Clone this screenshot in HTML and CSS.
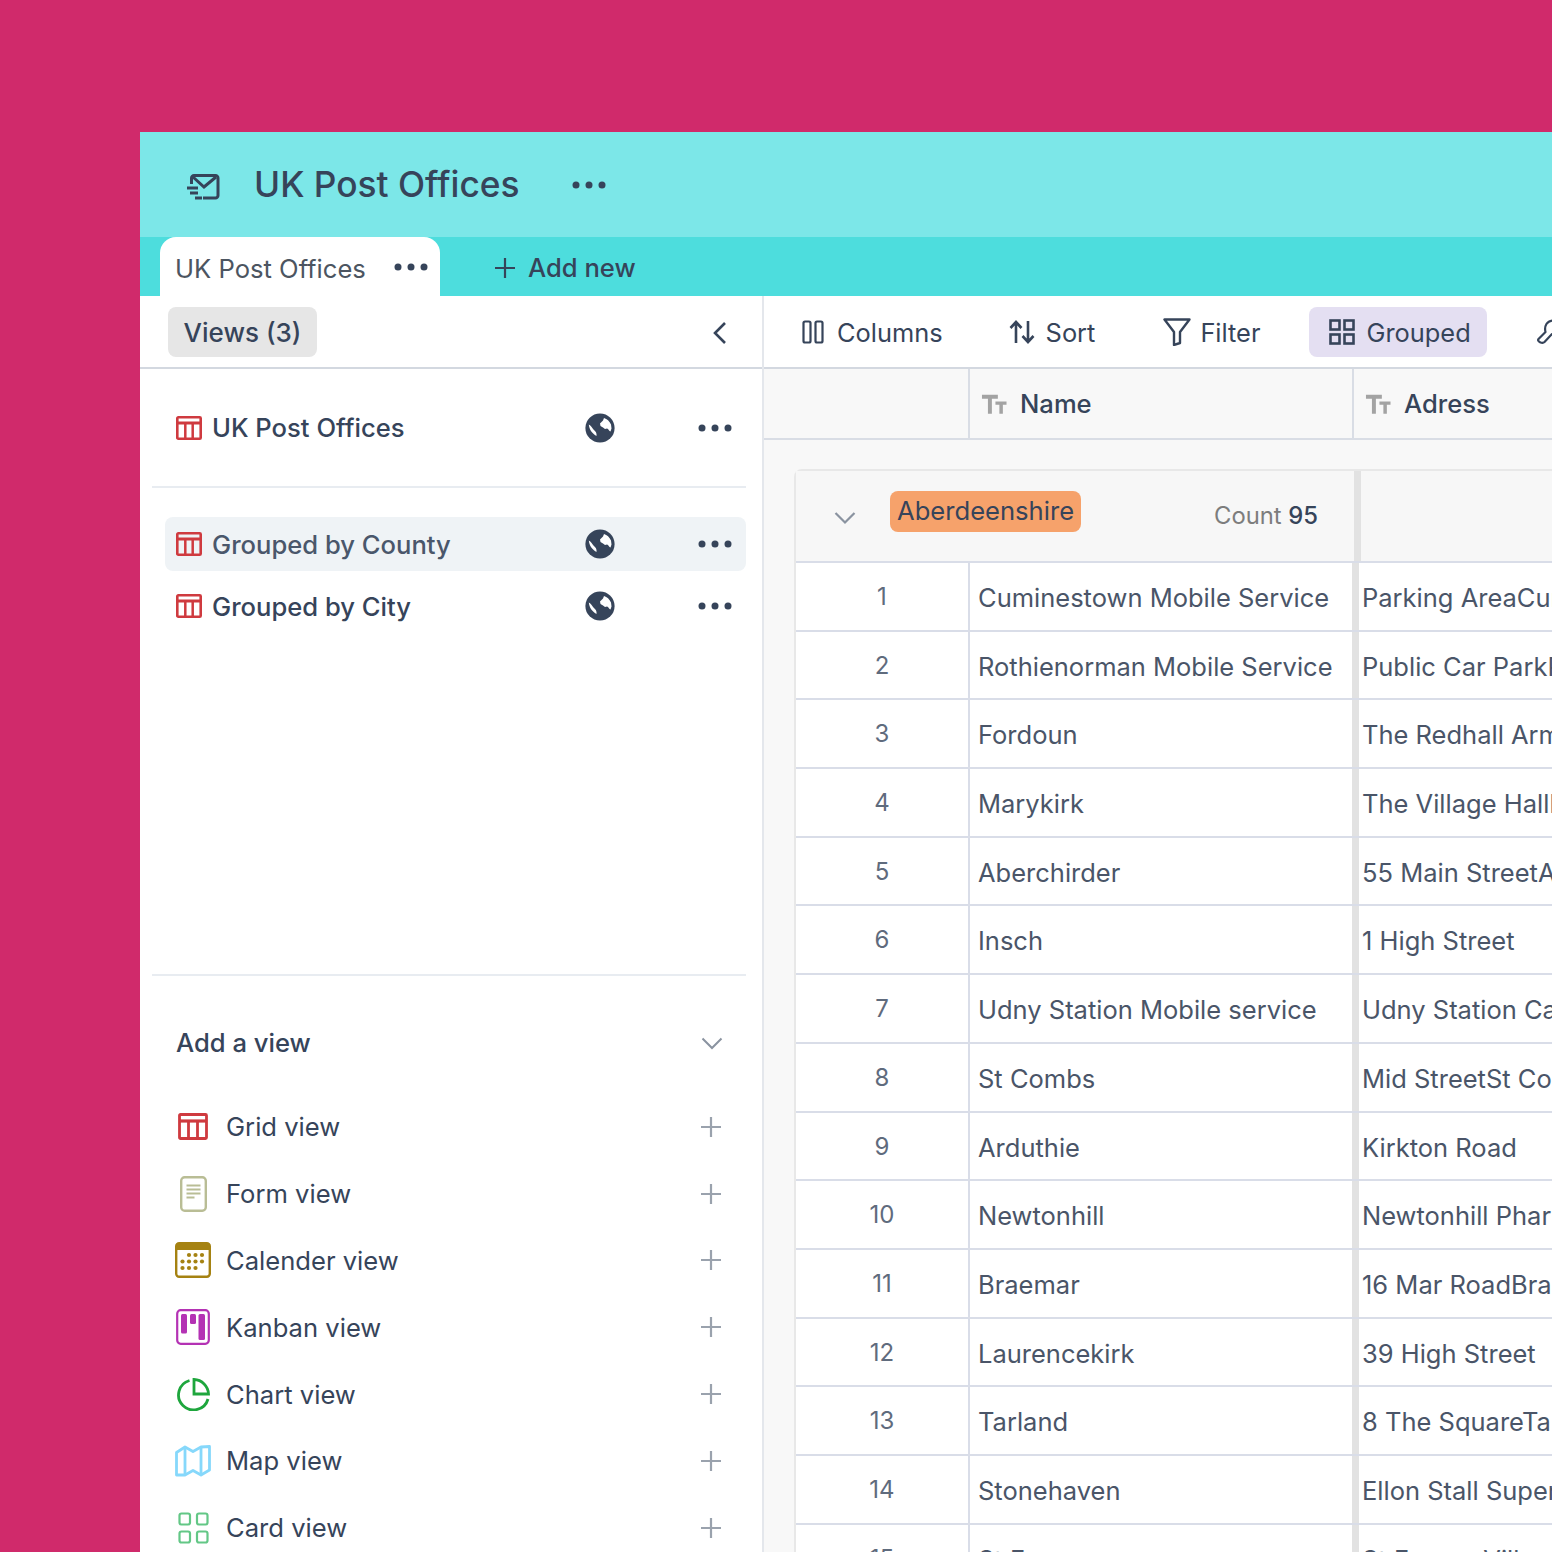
FILE: index.html
```html
<!DOCTYPE html>
<html lang="en">
<head>
<meta charset="utf-8">
<title>UK Post Offices</title>
<link rel="stylesheet" href="styles.css">
</head>
<body>
<svg class="defs" width="0" height="0" aria-hidden="true">
  <symbol id="dots" viewBox="0 0 34 8"><circle cx="4" cy="4" r="3.5"/><circle cx="17" cy="4" r="3.5"/><circle cx="30" cy="4" r="3.5"/></symbol>
  <symbol id="grid" viewBox="0 0 26 24"><rect x="1.3" y="1.3" width="23.4" height="21.4" rx="1" fill="none" stroke="#cf3a3f" stroke-width="2.6"/><path d="M1 7h24" stroke="#cf3a3f" stroke-width="3"/><path d="M9.300 7v16M16.700 7v16" stroke="#cf3a3f" stroke-width="2.500"/></symbol>
  <symbol id="globe" viewBox="0 0 30 30"><circle cx="15" cy="15" r="14.6" fill="#36445a"/><path d="M16 9.500l2-2 1-2.500c3 1 5.500 3 7 6.500l.5 4-1 3c-1.500-.5-2-2.500-3.500-3l-2 .5-2-1.500-2.500-1.500-.5-2.500zM3.800 11.500c.5 5 3.200 9 7.700 11.500.5-3-1-4.500-2.800-6.200-1.700-1.800-2.700-4.300-4.900-5.300z" fill="#fff"/></symbol>
  <symbol id="tt" viewBox="0 0 27 22"><path d="M1 1.500h16.500v4h-6.200V21H7.200V5.500H1z" fill="#a3a3a3"/><path d="M15 8.500h11.500v3.200h-3.800V21h-3.600v-9.300H15z" fill="#a3a3a3"/></symbol>
  <symbol id="plus" viewBox="0 0 22 22"><path d="M11 1v20M1 11h20" fill="none" stroke="currentColor" stroke-width="2.200"/></symbol>
</svg>

<div class="app">
  <header class="titlebar">
    <svg class="mail" viewBox="0 0 34 27" fill="none" stroke="#36445a" stroke-width="3"><path d="M4.500 11V5A2.500 2.500 0 0 1 7 2.500h21.500A2.500 2.500 0 0 1 31 5v17.500a2.500 2.500 0 0 1-2.500 2.500H16"/><path d="M6 4l11 10L29 4"/><path d="M0 15h11M3 20h8M8 25h7"/></svg>
    <h1>UK Post Offices</h1>
    <svg class="dots title-dots"><use href="#dots"/></svg>
  </header>

  <nav class="tabbar">
    <div class="tab">
      <span>UK Post Offices</span>
      <svg class="dots"><use href="#dots"/></svg>
    </div>
    <div class="add-new">
      <svg class="add-plus"><use href="#plus"/></svg>
      <span>Add new</span>
    </div>
  </nav>

  <div class="body">
    <aside class="sidebar">
      <div class="side-head">
        <span class="views-chip">Views (3)</span>
        <svg class="back" viewBox="0 0 14 24" fill="none" stroke="#36445a" stroke-width="2.600"><path d="M12 2L2 12l10 10"/></svg>
      </div>
      <div class="side-top">
        <div class="view-row">
          <svg class="grid-ic"><use href="#grid"/></svg>
          <span class="view-name">UK Post Offices</span>
          <svg class="globe"><use href="#globe"/></svg>
          <svg class="dots"><use href="#dots"/></svg>
        </div>
      </div>
      <div class="side-mid">
        <div class="view-row active">
          <svg class="grid-ic"><use href="#grid"/></svg>
          <span class="view-name">Grouped by County</span>
          <svg class="globe"><use href="#globe"/></svg>
          <svg class="dots"><use href="#dots"/></svg>
        </div>
        <div class="view-row">
          <svg class="grid-ic"><use href="#grid"/></svg>
          <span class="view-name">Grouped by City</span>
          <svg class="globe"><use href="#globe"/></svg>
          <svg class="dots"><use href="#dots"/></svg>
        </div>
      </div>
      <div class="side-add">
        <div class="add-head">
          <span>Add a view</span>
          <svg class="add-chev" viewBox="0 0 22 13" fill="none" stroke="#8a93a0" stroke-width="2"><path d="M1.500 1.500L11 11l9.500-9.500"/></svg>
        </div>
        <div class="add-row">
          <span class="ic-box"><svg class="ic ic-grid" viewBox="0 0 30 27"><rect x="1.500" y="1.500" width="27" height="24" rx="1" fill="none" stroke="#cf3a3f" stroke-width="2.800"/><path d="M1 8h28" stroke="#cf3a3f" stroke-width="3.200"/><path d="M10.500 8v18M19.500 8v18" stroke="#cf3a3f" stroke-width="2.800"/></svg></span>
          <span class="add-label">Grid view</span>
          <svg class="row-plus"><use href="#plus"/></svg>
        </div>
        <div class="add-row">
          <span class="ic-box"><svg class="ic ic-form" viewBox="0 0 27 36" fill="none" stroke="#b9bd95"><rect x="1.200" y="1.200" width="24.600" height="33.600" rx="3.500" stroke-width="2.400"/><path d="M6.500 9.500h14M6.500 13.500h14M6.500 17.500h14M6.500 21.500h8" stroke-width="2"/></svg></span>
          <span class="add-label">Form view</span>
          <svg class="row-plus"><use href="#plus"/></svg>
        </div>
        <div class="add-row">
          <span class="ic-box"><svg class="ic ic-cal" viewBox="0 0 36 36"><rect x="1.200" y="1.200" width="33.600" height="33.600" rx="3" fill="#fff" stroke="#a58212" stroke-width="2.400"/><path d="M1 8V4a3 3 0 0 1 3-3h28a3 3 0 0 1 3 3v4z" fill="#a58212"/><g fill="#a58212"><circle cx="14" cy="13" r="2.100"/><circle cx="20.500" cy="13" r="2.100"/><circle cx="27" cy="13" r="2.100"/><circle cx="7.500" cy="19.500" r="2.100"/><circle cx="14" cy="19.500" r="2.100"/><circle cx="20.500" cy="19.500" r="2.100"/><circle cx="27" cy="19.500" r="2.100"/><circle cx="7.500" cy="26" r="2.100"/><circle cx="14" cy="26" r="2.100"/><circle cx="20.500" cy="26" r="2.100"/></g></svg></span>
          <span class="add-label">Calender view</span>
          <svg class="row-plus"><use href="#plus"/></svg>
        </div>
        <div class="add-row">
          <span class="ic-box"><svg class="ic ic-kan" viewBox="0 0 34 36"><rect x="1.200" y="1.200" width="31.600" height="33.600" rx="3.500" fill="none" stroke="#b432b4" stroke-width="2.200"/><rect x="5" y="5" width="6" height="19.500" rx="1.500" fill="#b432b4"/><rect x="14" y="5" width="6" height="10" rx="1.500" fill="#b432b4"/><rect x="22.500" y="5" width="6.500" height="26" rx="1.500" fill="#b432b4"/></svg></span>
          <span class="add-label">Kanban view</span>
          <svg class="row-plus"><use href="#plus"/></svg>
        </div>
        <div class="add-row">
          <span class="ic-box"><svg class="ic ic-chart" viewBox="0 0 33 33" fill="none" stroke="#1ea63d" stroke-width="2.800"><path d="M31 21A15 15 0 1 1 12.500 2.500"/><path d="M17 1.500A15 15 0 0 1 31.500 16H17z"/></svg></span>
          <span class="add-label">Chart view</span>
          <svg class="row-plus"><use href="#plus"/></svg>
        </div>
        <div class="add-row">
          <span class="ic-box"><svg class="ic ic-map" viewBox="0 0 36 32" fill="none" stroke="#86d8fb" stroke-width="2.800" stroke-linejoin="round"><path d="M1.500 30V7.500L10 2l8 4.500L26 2l8.500-.5V25L26 30l-8-4.500L10 30z"/><path d="M10 2v28M26 2v28"/></svg></span>
          <span class="add-label">Map view</span>
          <svg class="row-plus"><use href="#plus"/></svg>
        </div>
        <div class="add-row">
          <span class="ic-box"><svg class="ic ic-card" viewBox="0 0 31 32" fill="none" stroke="#63c786" stroke-width="2.200"><rect x="1.500" y="1.500" width="10.500" height="11" rx="2"/><rect x="19" y="1.500" width="10.500" height="11" rx="2"/><rect x="1.500" y="19.500" width="10.500" height="11" rx="2"/><rect x="19" y="19.500" width="10.500" height="11" rx="2"/></svg></span>
          <span class="add-label">Card view</span>
          <svg class="row-plus"><use href="#plus"/></svg>
        </div>
      </div>
    </aside>

    <main class="main">
      <div class="toolbar">
        <div class="tool tool-columns">
          <svg class="t-ic columns-ic" viewBox="0 0 22 24" fill="none" stroke="#36445a" stroke-width="2.200"><rect x="1.500" y="1.500" width="7" height="21" rx="1.500"/><rect x="13.500" y="1.500" width="7" height="21" rx="1.500"/></svg>
          <span>Columns</span>
        </div>
        <div class="tool tool-sort">
          <svg class="t-ic sort-ic" viewBox="0 0 26 24" fill="none" stroke="#36445a" stroke-width="2.600"><path d="M7 23V2M1.500 8L7 2l5.500 6M19 1v21M13.500 16l5.500 6 5.500-6"/></svg>
          <span>Sort</span>
        </div>
        <div class="tool tool-filter">
          <svg class="t-ic filter-ic" viewBox="0 0 28 28" fill="none" stroke="#36445a" stroke-width="2.400" stroke-linejoin="round"><path d="M1.500 1.500h25L17 14v11l-6 2V14z"/></svg>
          <span>Filter</span>
        </div>
        <div class="tool tool-grouped">
          <svg class="t-ic grouped-ic" viewBox="0 0 26 26" fill="none" stroke="#36445a" stroke-width="2.600"><rect x="1.500" y="1.500" width="9" height="9"/><rect x="15.500" y="1.500" width="9" height="9"/><rect x="1.500" y="15.500" width="9" height="9"/><rect x="15.500" y="15.500" width="9" height="9"/></svg>
          <span>Grouped</span>
        </div>
        <svg class="t-ic wrench" viewBox="0 0 26 26" fill="none" stroke="#36445a" stroke-width="2.200" stroke-linejoin="round"><path d="M1.500 20L8.500 13C7 7 10 1.500 16 1.500c6 0 9 5 7.500 10-1.500 3.500-5 5-8.500 3.500L7.500 23c-2 2-8-.5-6-3z"/></svg>
      </div>

      <div class="col-head">
        <div class="ch ch-num"></div>
        <div class="ch ch-name"><svg class="tt"><use href="#tt"/></svg><span>Name</span></div>
        <div class="ch ch-adr"><svg class="tt"><use href="#tt"/></svg><span>Adress</span></div>
      </div>

      <div class="content">
        <section class="group">
          <div class="g-head">
            <div class="g-left">
              <svg class="g-chev" viewBox="0 0 22 14" fill="none" stroke="#8a93a0" stroke-width="2.200"><path d="M1.500 2L11 11.500 20.500 2"/></svg>
              <span class="g-tag">Aberdeenshire</span>
              <span class="g-count">Count <b>95</b></span>
            </div>
            <div class="g-right"></div>
          </div>
          <div class="row"><div class="c-num">1</div><div class="c-name">Cuminestown Mobile Service</div><div class="c-adr">Parking AreaCuminestown</div></div>
          <div class="row"><div class="c-num">2</div><div class="c-name">Rothienorman Mobile Service</div><div class="c-adr">Public Car ParkRothienorman</div></div>
          <div class="row"><div class="c-num">3</div><div class="c-name">Fordoun</div><div class="c-adr">The Redhall Arms</div></div>
          <div class="row"><div class="c-num">4</div><div class="c-name">Marykirk</div><div class="c-adr">The Village HallMarykirk</div></div>
          <div class="row"><div class="c-num">5</div><div class="c-name">Aberchirder</div><div class="c-adr">55 Main StreetAberchirder</div></div>
          <div class="row"><div class="c-num">6</div><div class="c-name">Insch</div><div class="c-adr">1 High Street</div></div>
          <div class="row"><div class="c-num">7</div><div class="c-name">Udny Station Mobile service</div><div class="c-adr">Udny Station Car Park</div></div>
          <div class="row"><div class="c-num">8</div><div class="c-name">St Combs</div><div class="c-adr">Mid StreetSt Combs</div></div>
          <div class="row"><div class="c-num">9</div><div class="c-name">Arduthie</div><div class="c-adr">Kirkton Road</div></div>
          <div class="row"><div class="c-num">10</div><div class="c-name">Newtonhill</div><div class="c-adr">Newtonhill Pharmacy</div></div>
          <div class="row"><div class="c-num">11</div><div class="c-name">Braemar</div><div class="c-adr">16 Mar RoadBraemar</div></div>
          <div class="row"><div class="c-num">12</div><div class="c-name">Laurencekirk</div><div class="c-adr">39 High Street</div></div>
          <div class="row"><div class="c-num">13</div><div class="c-name">Tarland</div><div class="c-adr">8 The SquareTarland</div></div>
          <div class="row"><div class="c-num">14</div><div class="c-name">Stonehaven</div><div class="c-adr">Ellon Stall Supermarket</div></div>
          <div class="row"><div class="c-num">15</div><div class="c-name">St Fergus</div><div class="c-adr">St Fergus Village</div></div>
        </section>
      </div>
    </main>
  </div>
</div>
</body>
</html>
```

FILE: styles.css
```css
* { box-sizing: border-box; }
html, body { margin: 0; height: 1552px; overflow: hidden; }
body {
  background: #d02a6b;
  font-family: Inter, "Liberation Sans", sans-serif;
  color: #36445a;
  padding: 132px 0 0 140px;
}
.defs { position: absolute; }
svg { display: block; flex: none; }

.app { width: 1412px; height: 1420px; background: #fff; overflow: hidden; }

.titlebar {
  height: 105px;
  background: #7ce7e8;
  display: flex;
  align-items: center;
  padding-left: 47px;
}
.mail { width: 34px; height: 27px; margin-top: 4px; }
.titlebar h1 {
  margin: 0 0 0 33px;
  font-size: 35.3px;
  font-weight: 500;
  line-height: 44px;
  white-space: nowrap;
}
.dots { width: 34px; height: 8px; fill: #36445a; }
.title-dots { margin-left: 52px; }

.tabbar {
  height: 59px;
  background: #4ddddd;
  display: flex;
  padding-left: 20px;
}
.tab {
  width: 280px;
  background: #fff;
  border-radius: 16px 16px 0 0;
  display: flex;
  align-items: center;
  padding: 3px 0 0 15px;
  font-size: 25.6px;
  color: #4c5561;
  gap: 28px;
}
.tab .dots { margin-top: -3px; }
.add-new {
  display: flex;
  align-items: center;
  margin-left: 54px;
  padding-top: 2px;
  font-size: 25.6px;
  font-weight: 500;
  gap: 12px;
}
.add-plus { width: 22px; height: 22px; color: #36445a; }

.body { display: flex; height: 1256px; }

.sidebar { width: 624px; border-right: 2px solid #e4e7ec; flex: none; }
.side-head {
  height: 73px;
  border-bottom: 2px solid #d3d8e0;
  display: flex;
  align-items: center;
  justify-content: space-between;
  padding: 0 35px 0 28px;
}
.views-chip {
  width: 149px;
  height: 50px;
  background: #e6e6e6;
  border-radius: 8px;
  font-size: 26px;
  font-weight: 500;
  line-height: 52px;
  text-align: center;
}
.back { width: 14px; height: 24px; margin-top: 2px; }

.side-top {
  height: 119px;
  margin: 0 16px 0 12px;
  border-bottom: 2px solid #e8ecf1;
  padding: 32px 0 0 13px;
}
.side-top .view-name { margin-top: -2px; }
.side-mid {
  height: 488px;
  margin: 0 16px 0 12px;
  border-bottom: 2px solid #e8ecf1;
  padding: 29px 0 0 13px;
  display: flex;
  flex-direction: column;
  gap: 8px;
}
.view-row {
  height: 54px;
  display: flex;
  align-items: center;
  border-radius: 8px;
  padding-left: 11px;
  font-size: 25.6px;
  font-weight: 500;
}
.view-row.active { background: #eff3f6; color: #4a576b; }
.grid-ic { width: 26px; height: 24px; }
.view-name { margin-left: 10px; width: 373px; white-space: nowrap; }
.globe { width: 30px; height: 30px; }
.view-row .dots { margin-left: 83px; }

.side-add { padding: 0 0 0 35px; }
.add-head {
  height: 117.5px;
  display: flex;
  align-items: center;
  justify-content: space-between;
  padding: 50px 39px 33.5px 1px;
  font-size: 25.6px;
  font-weight: 500;
}
.add-head span { margin: -2px 0 0 0; }
.add-chev { width: 22px; height: 13px; }
.add-row {
  height: 66.8px;
  display: flex;
  align-items: center;
  font-size: 25.6px;
}
.ic-box { width: 36px; display: flex; justify-content: center; flex: none; }
.ic-grid { width: 30px; height: 27px; }
.ic-form { width: 27px; height: 36px; }
.ic-cal { width: 36px; height: 36px; }
.ic-kan { width: 34px; height: 36px; }
.ic-chart { width: 33px; height: 33px; }
.ic-map { width: 36px; height: 32px; }
.ic-card { width: 31px; height: 32px; }
.add-label { margin-left: 15px; width: 474px; white-space: nowrap; }
.row-plus { width: 22px; height: 22px; color: #9aa2ad; }

.main { flex: 1; background: #f8f8f8; min-width: 0; }
.toolbar {
  height: 73px;
  background: #fff;
  border-bottom: 2px solid #d3d8e0;
  display: flex;
  align-items: center;
  font-size: 25.4px;
  overflow: hidden;
}
.tool { display: flex; align-items: center; flex: none; }
.tool span { padding-top: 2px; }
.t-ic { flex: none; }
.tool-columns { margin-left: 38px; gap: 13px; }
.columns-ic { width: 22px; height: 24px; }
.tool-sort { margin-left: 66px; gap: 11px; }
.sort-ic { width: 26px; height: 24px; }
.tool-filter { margin-left: 68px; gap: 9px; }
.filter-ic { width: 28px; height: 28px; }
.tool-grouped {
  margin-left: 49px;
  width: 178px;
  height: 50px;
  background: #e4dff2;
  border-radius: 8px;
  padding-left: 20px;
  gap: 11px;
}
.grouped-ic { width: 26px; height: 26px; }
.wrench { width: 26px; height: 26px; margin-left: 50px; }

.col-head {
  height: 71px;
  display: flex;
  border-bottom: 2px solid #d9dde5;
  font-size: 25.6px;
  font-weight: 500;
}
.ch { display: flex; align-items: center; gap: 13px; padding-left: 11px; flex: none; }
.ch-num { width: 204px; padding: 0; }
.ch-name { width: 384px; border-left: 2px solid #d9dde5; }
.ch-adr { width: 300px; border-left: 2px solid #d9dde5; }
.tt { width: 26px; height: 22px; }

.content { padding: 29px 0 0 30px; }
.group {
  width: 800px;
  background: #fff;
  border: 2px solid #e8e8e8;
  border-right: 0;
  border-radius: 8px 0 0 0;
}
.g-head { height: 90px; display: flex; background: #f7f7f7; }
.g-left {
  width: 565px;
  display: flex;
  border-right: 7px solid #e2e2e2;
}
.g-chev { width: 22px; height: 14px; margin: 40px 0 0 38px; }
.g-tag {
  height: 41px;
  margin: 20px 0 0 34px;
  padding: 0 7px;
  background: #f6a26b;
  border-radius: 8px;
  font-size: 25.6px;
  line-height: 40px;
  white-space: nowrap;
}
.g-count {
  margin: 30px 0 0 auto;
  padding-right: 36px;
  font-size: 23.8px;
  line-height: 30px;
  color: #7d7d7d;
  white-space: nowrap;
}
.g-count b { font-weight: 500; color: #36445a; }

.row {
  height: 68.7px;
  display: flex;
  border-top: 2px solid #d9dde8;
  font-size: 25.5px;
  color: #4a5568;
  line-height: 66px;
  white-space: nowrap;
}
.c-num { width: 172px; text-align: center; font-size: 24px; color: #5f6b7d; flex: none; padding-top: 1px; }
.c-name { width: 384px; padding: 2px 0 0 8px; border-left: 2px solid #d9dde8; flex: none; }
.c-adr { flex: 1; padding: 2px 0 0 3px; border-left: 7px solid #e2e2e2; overflow: hidden; }
```
